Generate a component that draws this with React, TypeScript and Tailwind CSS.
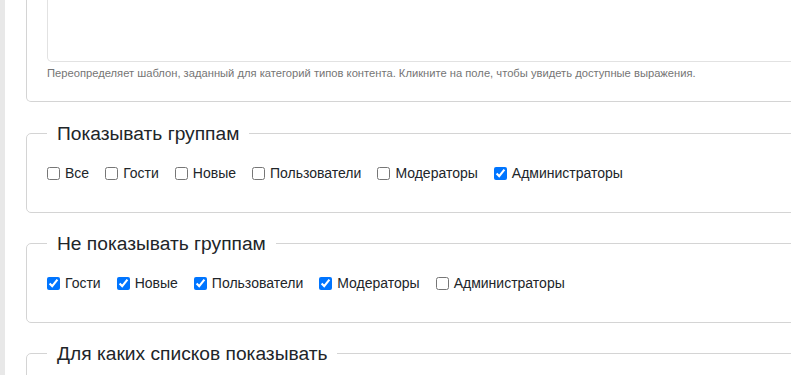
import React from "react";

type Item = { label: string; checked: boolean };

const showGroups: Item[] = [
  { label: "Все", checked: false },
  { label: "Гости", checked: false },
  { label: "Новые", checked: false },
  { label: "Пользователи", checked: false },
  { label: "Модераторы", checked: false },
  { label: "Администраторы", checked: true },
];

const hideGroups: Item[] = [
  { label: "Гости", checked: true },
  { label: "Новые", checked: true },
  { label: "Пользователи", checked: true },
  { label: "Модераторы", checked: true },
  { label: "Администраторы", checked: false },
];

function CheckRow({ items }: { items: Item[] }) {
  return (
    <div className="mt-[18px] flex items-center gap-4 h-[21px]">
      {items.map((it) => (
        <label key={it.label} className="flex items-center gap-[5px] text-[14px] leading-[21px] text-[#212529]">
          <input type="checkbox" defaultChecked={it.checked} className="w-[13px] h-[13px] m-0" />
          <span>{it.label}</span>
        </label>
      ))}
    </div>
  );
}

function Group({ title, first, children }: { title: string; first?: boolean; children?: React.ReactNode }) {
  return (
    <fieldset className={(first ? "mt-5" : "mt-[19px]") + " border border-[#d4d4d4] rounded-[5px] px-5 pb-[28px] mr-[-40px]"}>
      <legend className="px-[10px] text-[19.2px] leading-[23px] text-[#212529]">{title}</legend>
      {children}
    </fieldset>
  );
}

export default function App() {
  return (
    <div className="flex w-[791px] h-[375px] overflow-hidden bg-white" style={{ fontFamily: '"Liberation Sans", Arial, sans-serif' }}>
      <div className="w-[5px] shrink-0 bg-[#e8e8e8]" />
      <div className="flex-1 pl-[21px] min-w-0">
        <div className="border border-t-0 border-[#d4d4d4] rounded-b-[5px] px-5 pb-[20px] mr-[-40px]">
          <textarea className="block w-full h-[62px] border border-t-0 border-[#e2e2e2] rounded-b-[5px] resize-none outline-none" />
          <div className="mt-[3px] text-[11.2px] leading-[16px] text-[#757575]">
            Переопределяет шаблон, заданный для категорий типов контента. Кликните на поле, чтобы увидеть доступные выражения.
          </div>
        </div>
        <Group title="Показывать группам" first>
          <CheckRow items={showGroups} />
        </Group>
        <Group title="Не показывать группам">
          <CheckRow items={hideGroups} />
        </Group>
        <Group title="Для каких списков показывать">
          <div className="h-[60px]" />
        </Group>
      </div>
    </div>
  );
}
